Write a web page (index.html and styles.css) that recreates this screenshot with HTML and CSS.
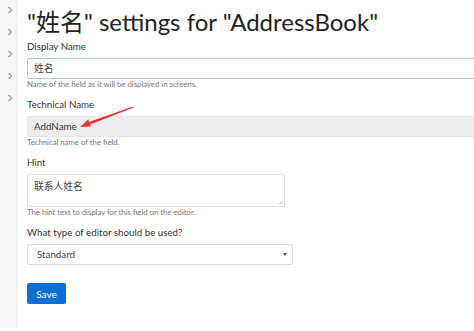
FILE: index.html
```html
<!DOCTYPE html>
<html lang="zh">

<head>
    <meta charset="UTF-8">
    <meta name="viewport" content="width=device-width, initial-scale=1.0">
    <title>Field settings</title>
    <link rel="stylesheet" href="styles.css">
</head>

<body>
    <div class="app">
        <div class="sidebar">
            <svg class="chevron" viewBox="0 0 6 8"><polyline points="1.5,1 4.5,4 1.5,7" /></svg>
            <svg class="chevron" viewBox="0 0 6 8"><polyline points="1.5,1 4.5,4 1.5,7" /></svg>
            <svg class="chevron" viewBox="0 0 6 8"><polyline points="1.5,1 4.5,4 1.5,7" /></svg>
            <svg class="chevron" viewBox="0 0 6 8"><polyline points="1.5,1 4.5,4 1.5,7" /></svg>
            <svg class="chevron" viewBox="0 0 6 8"><polyline points="1.5,1 4.5,4 1.5,7" /></svg>
        </div>
        <div class="main">
            <h1>"姓名" settings for "AddressBook"</h1>

            <div class="field">
                <label>Display Name</label>
                <div class="input focused">姓名</div>
                <div class="help">Name of the field as it will be displayed in screens.</div>
            </div>

            <div class="field">
                <label>Technical Name</label>
                <div class="input readonly">AddName</div>
                <div class="help">Technical name of the field.</div>
                <svg class="arrow" viewBox="0 0 60 25">
                    <polygon class="shaft" points="56,1.4 56.6,2.6 13,19.6 12,17" />
                    <polygon points="3,22 11.2,14.6 13.8,21.6" />
                </svg>
            </div>

            <div class="field">
                <label>Hint</label>
                <div class="input textarea">联系人姓名
                    <svg class="grip" viewBox="0 0 6 6"><line x1="1" y1="5.5" x2="5.5" y2="1" /><line x1="3.5" y1="5.5" x2="5.5" y2="3.5" /></svg>
                </div>
                <div class="help">The hint text to display for this field on the editor.</div>
            </div>

            <div class="field">
                <label>What type of editor should be used?</label>
                <div class="input select">Standard <span class="caret"></span></div>
            </div>

            <button class="save">Save</button>
        </div>
    </div>
</body>

</html>
```

FILE: styles.css
```css
body {
    margin: 0px;
    overflow: hidden;
    font-family: Lato, "Noto Sans CJK SC", sans-serif;
    color: #2b2b2b;
    background-color: white;
}

.app {
    display: flex;
    height: 331px;
}

.sidebar {
    width: 18px;
    height: 328px;
    padding-top: 6px;
    box-sizing: border-box;
    background-color: #f5f5f5;
}

.sidebar .chevron {
    display: block;
    width: 6px;
    height: 8px;
    margin: 0px 0px 14px 7px;
    fill: none;
    stroke: #666;
    stroke-width: 1;
}

.main {
    flex: 1;
    padding-left: 9px;
    margin-right: -12px;
}

h1 {
    margin: 5px 0px 1px 0px;
    font-size: 24px;
    font-weight: normal;
    line-height: 33px;
    color: #222;
    white-space: nowrap;
}

.field {
    position: relative;
    margin-bottom: 8px;
}

.field label {
    display: block;
    margin-bottom: 5px;
    font-size: 9.75px;
    line-height: 14px;
    color: #333;
}

.input {
    position: relative;
    height: 21px;
    padding: 0px 6px;
    box-sizing: border-box;
    border: 1px solid #dcdcdc;
    border-radius: 2px;
    font-size: 9.75px;
    line-height: 19px;
    color: #444;
}

.input.focused {
    border-color: #a9cbec;
}

.input.readonly {
    background-color: #eceef0;
    border-color: #e2e4e6;
    color: #333;
}

.input.textarea {
    width: 258px;
    height: 33px;
    padding-top: 2px;
}

.input.textarea .grip {
    position: absolute;
    right: 1px;
    bottom: 1px;
    width: 5px;
    height: 5px;
    stroke: #999;
    stroke-width: 0.8;
}

.input.select {
    width: 266px;
    padding-left: 9px;
}

.input.select .caret {
    position: absolute;
    right: 5px;
    top: 8px;
    border-left: 2px solid transparent;
    border-right: 2px solid transparent;
    border-top: 3px solid #444;
}

.help {
    font-size: 7.75px;
    line-height: 10px;
    color: #777;
    white-space: nowrap;
}

.arrow {
    position: absolute;
    left: 50px;
    top: 8px;
    width: 60px;
    height: 25px;
    fill: #e8302c;
}

.save {
    margin-top: 10px;
    width: 39px;
    height: 21px;
    padding: 0px;
    border: none;
    border-radius: 2px;
    background-color: #0b6fd5;
    color: white;
    font-family: Lato, sans-serif;
    font-size: 10px;
}
```
